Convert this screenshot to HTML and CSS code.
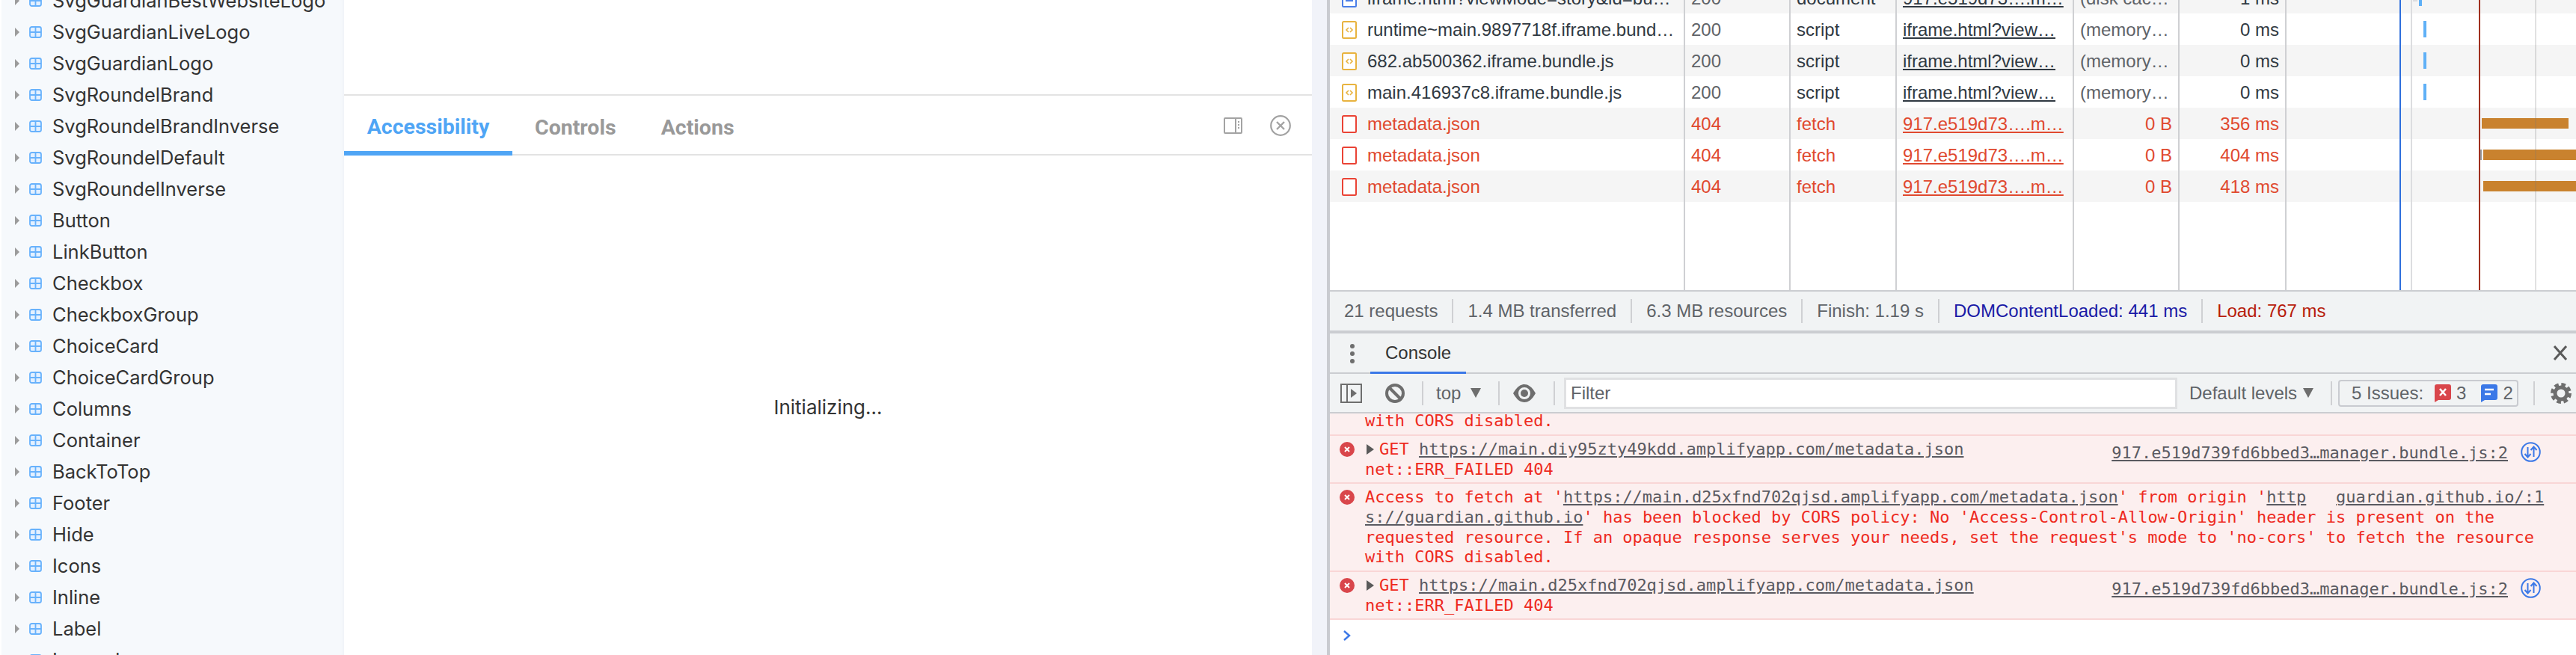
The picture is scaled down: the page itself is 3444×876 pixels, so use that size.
FILE: index.html
```html
<!DOCTYPE html>
<html lang="en">
<head>
<meta charset="utf-8">
<title>Storybook with DevTools</title>
<link rel="stylesheet" href="styles.css">
</head>
<body>
<svg class="defs" width="0" height="0" aria-hidden="true">
  <symbol id="grid" viewBox="0 0 17 16"><rect x="1" y="1" width="15" height="14" rx="2.5" fill="#e3f0ff" stroke="#68b2fc" stroke-width="1.8"/><path d="M8.5 1v14M1 8h15" stroke="#68b2fc" stroke-width="1.8"/></symbol>
  <symbol id="caret" viewBox="0 0 6 12"><path d="M0 0l6 6-6 6z" fill="#9c9c9c"/></symbol>
  <symbol id="script" viewBox="0 0 20 24"><rect x="1" y="1" width="18" height="22" rx="1.5" fill="#fff" stroke="#e8b33f" stroke-width="2"/><path d="M9 9l-3 3 3 3M11 9l3 3-3 3" fill="none" stroke="#e8b33f" stroke-width="1.6"/></symbol>
  <symbol id="doc" viewBox="0 0 20 24"><rect x="1" y="1" width="18" height="22" rx="1.5" fill="#fff" stroke="#4a7ee8" stroke-width="2"/><path d="M5 11h10M5 15h10" stroke="#4a7ee8" stroke-width="2"/></symbol>
  <symbol id="fail" viewBox="0 0 20 24"><rect x="1" y="1" width="18" height="22" rx="1.5" fill="#fff" stroke="#ea4335" stroke-width="2"/></symbol>
  <symbol id="err" viewBox="0 0 20 20"><circle cx="10" cy="10" r="10" fill="#d9464b"/><path d="M7 7l6 6M13 7l-6 6" stroke="#fff" stroke-width="2"/></symbol>
  <symbol id="sync" viewBox="0 0 27 27"><circle cx="13.500" cy="13.500" r="12.300" fill="none" stroke="#3b78e7" stroke-width="2"/><path d="M9.500 7v13M5.500 16l4 4.500 4-4.500M17.500 20V7M13.500 11l4-4.500 4 4.500" fill="none" stroke="#3b78e7" stroke-width="2"/></symbol>
</svg>

<nav class="sidebar">
  <div class="tree-row"><svg class="caret"><use href="#caret"/></svg><svg class="grid"><use href="#grid"/></svg><span>SvgGuardianBestWebsiteLogo</span></div>
  <div class="tree-row"><svg class="caret"><use href="#caret"/></svg><svg class="grid"><use href="#grid"/></svg><span>SvgGuardianLiveLogo</span></div>
  <div class="tree-row"><svg class="caret"><use href="#caret"/></svg><svg class="grid"><use href="#grid"/></svg><span>SvgGuardianLogo</span></div>
  <div class="tree-row"><svg class="caret"><use href="#caret"/></svg><svg class="grid"><use href="#grid"/></svg><span>SvgRoundelBrand</span></div>
  <div class="tree-row"><svg class="caret"><use href="#caret"/></svg><svg class="grid"><use href="#grid"/></svg><span>SvgRoundelBrandInverse</span></div>
  <div class="tree-row"><svg class="caret"><use href="#caret"/></svg><svg class="grid"><use href="#grid"/></svg><span>SvgRoundelDefault</span></div>
  <div class="tree-row"><svg class="caret"><use href="#caret"/></svg><svg class="grid"><use href="#grid"/></svg><span>SvgRoundelInverse</span></div>
  <div class="tree-row"><svg class="caret"><use href="#caret"/></svg><svg class="grid"><use href="#grid"/></svg><span>Button</span></div>
  <div class="tree-row"><svg class="caret"><use href="#caret"/></svg><svg class="grid"><use href="#grid"/></svg><span>LinkButton</span></div>
  <div class="tree-row"><svg class="caret"><use href="#caret"/></svg><svg class="grid"><use href="#grid"/></svg><span>Checkbox</span></div>
  <div class="tree-row"><svg class="caret"><use href="#caret"/></svg><svg class="grid"><use href="#grid"/></svg><span>CheckboxGroup</span></div>
  <div class="tree-row"><svg class="caret"><use href="#caret"/></svg><svg class="grid"><use href="#grid"/></svg><span>ChoiceCard</span></div>
  <div class="tree-row"><svg class="caret"><use href="#caret"/></svg><svg class="grid"><use href="#grid"/></svg><span>ChoiceCardGroup</span></div>
  <div class="tree-row"><svg class="caret"><use href="#caret"/></svg><svg class="grid"><use href="#grid"/></svg><span>Columns</span></div>
  <div class="tree-row"><svg class="caret"><use href="#caret"/></svg><svg class="grid"><use href="#grid"/></svg><span>Container</span></div>
  <div class="tree-row"><svg class="caret"><use href="#caret"/></svg><svg class="grid"><use href="#grid"/></svg><span>BackToTop</span></div>
  <div class="tree-row"><svg class="caret"><use href="#caret"/></svg><svg class="grid"><use href="#grid"/></svg><span>Footer</span></div>
  <div class="tree-row"><svg class="caret"><use href="#caret"/></svg><svg class="grid"><use href="#grid"/></svg><span>Hide</span></div>
  <div class="tree-row"><svg class="caret"><use href="#caret"/></svg><svg class="grid"><use href="#grid"/></svg><span>Icons</span></div>
  <div class="tree-row"><svg class="caret"><use href="#caret"/></svg><svg class="grid"><use href="#grid"/></svg><span>Inline</span></div>
  <div class="tree-row"><svg class="caret"><use href="#caret"/></svg><svg class="grid"><use href="#grid"/></svg><span>Label</span></div>
  <div class="tree-row"><svg class="caret"><use href="#caret"/></svg><svg class="grid"><use href="#grid"/></svg><span>Legend</span></div>
</nav>

<main class="story">
  <div class="canvas"></div>
  <div class="addon-bar">
    <div class="tab tab-active">Accessibility</div>
    <div class="tab">Controls</div>
    <div class="tab">Actions</div>
    <div class="addon-tools">
      <svg class="addon-panel" viewBox="0 0 25 22"><rect x="1" y="1" width="23" height="20" rx="1" fill="none" stroke="#a3a3a3" stroke-width="2"/><path d="M16 1v20" stroke="#a3a3a3" stroke-width="2"/><path d="M19 6h2M19 10h2M19 14h2" stroke="#a3a3a3" stroke-width="2"/></svg>
      <svg class="addon-close" viewBox="0 0 28 28"><circle cx="14" cy="14" r="12.800" fill="none" stroke="#a3a3a3" stroke-width="2.200"/><path d="M9 9l10 10M19 9L9 19" stroke="#a3a3a3" stroke-width="2.400"/></svg>
    </div>
  </div>
  <div class="addon-body">Initializing...</div>
</main>

<div class="gutter"></div>

<section class="devtools">
  <div class="net">
    <div class="net-row even">
      <div class="c name"><svg class="ficon"><use href="#doc"/></svg>iframe.html?viewMode=story&amp;id=bu…</div><div class="c status">200</div><div class="c">document</div><div class="c link">917.e519d73….m…</div><div class="c muted">(disk cac…</div><div class="c right tm">1 ms</div>
      <div class="wf"><i class="bar-wait wait-first"></i><i class="bar-blue blue-first"></i></div>
    </div>
    <div class="net-row">
      <div class="c name"><svg class="ficon"><use href="#script"/></svg>runtime~main.9897718f.iframe.bund…</div><div class="c status">200</div><div class="c">script</div><div class="c link">iframe.html?view…</div><div class="c muted">(memory…</div><div class="c right tm">0 ms</div>
      <div class="wf"><i class="bar-blue"></i></div>
    </div>
    <div class="net-row even">
      <div class="c name"><svg class="ficon"><use href="#script"/></svg>682.ab500362.iframe.bundle.js</div><div class="c status">200</div><div class="c">script</div><div class="c link">iframe.html?view…</div><div class="c muted">(memory…</div><div class="c right tm">0 ms</div>
      <div class="wf"><i class="bar-blue"></i></div>
    </div>
    <div class="net-row">
      <div class="c name"><svg class="ficon"><use href="#script"/></svg>main.416937c8.iframe.bundle.js</div><div class="c status">200</div><div class="c">script</div><div class="c link">iframe.html?view…</div><div class="c muted">(memory…</div><div class="c right tm">0 ms</div>
      <div class="wf"><i class="bar-blue"></i></div>
    </div>
    <div class="net-row even failed">
      <div class="c name"><svg class="ficon"><use href="#fail"/></svg>metadata.json</div><div class="c status">404</div><div class="c">fetch</div><div class="c link">917.e519d73….m…</div><div class="c right">0 B</div><div class="c right tm">356 ms</div>
      <div class="wf"><i class="bar-orange o1"></i></div>
    </div>
    <div class="net-row failed">
      <div class="c name"><svg class="ficon"><use href="#fail"/></svg>metadata.json</div><div class="c status">404</div><div class="c">fetch</div><div class="c link">917.e519d73….m…</div><div class="c right">0 B</div><div class="c right tm">404 ms</div>
      <div class="wf"><i class="bar-wait wait-mid"></i><i class="bar-orange o2"></i></div>
    </div>
    <div class="net-row even failed">
      <div class="c name"><svg class="ficon"><use href="#fail"/></svg>metadata.json</div><div class="c status">404</div><div class="c">fetch</div><div class="c link">917.e519d73….m…</div><div class="c right">0 B</div><div class="c right tm">418 ms</div>
      <div class="wf"><i class="bar-orange o2"></i></div>
    </div>
    <div class="net-row filler">
      <div class="c"></div><div class="c"></div><div class="c"></div><div class="c"></div><div class="c"></div><div class="c"></div><div class="wf"></div>
    </div>
    <i class="vline grid-a"></i><i class="vline grid-b"></i><i class="vline dcl"></i><i class="vline load"></i>
  </div>

  <div class="summary">
    <span class="sum-item">21 requests</span>
    <span class="sum-item">1.4 MB transferred</span>
    <span class="sum-item">6.3 MB resources</span>
    <span class="sum-item">Finish: 1.19 s</span>
    <span class="sum-item sum-dcl">DOMContentLoaded: 441 ms</span>
    <span class="sum-item sum-load">Load: 767 ms</span>
  </div>

  <div class="drawer-tabs">
    <svg class="kebab" viewBox="0 0 6 26"><circle cx="3" cy="3" r="3"/><circle cx="3" cy="13" r="3"/><circle cx="3" cy="23" r="3"/></svg>
    <div class="drawer-tab">Console</div>
    <svg class="drawer-close" viewBox="0 0 20 20"><path d="M2 1l16 18M18 1L2 19" stroke="#5a5a5a" stroke-width="3" fill="none"/></svg>
  </div>

  <div class="toolbar">
    <svg class="t-toggle" viewBox="0 0 29 26"><rect x="1" y="1" width="27" height="24" fill="none" stroke="#6e6e6e" stroke-width="2"/><path d="M9 1v24" stroke="#6e6e6e" stroke-width="2"/><path d="M14 7l8 6-8 6z" fill="#6e6e6e"/></svg>
    <svg class="t-block" viewBox="0 0 26 26"><circle cx="13" cy="13" r="11" fill="none" stroke="#6e6e6e" stroke-width="4"/><path d="M5 5l16 16" stroke="#6e6e6e" stroke-width="4"/></svg>
    <i class="t-sep sep-block"></i>
    <div class="t-top">top<i class="tri"></i></div>
    <i class="t-sep"></i>
    <svg class="t-eye" viewBox="0 0 30 24"><path d="M0 12C5 3 10 0 15 0s10 3 15 12c-5 9-10 12-15 12S5 21 0 12z" fill="#6e6e6e"/><circle cx="15" cy="12" r="8" fill="#f1f3f4"/><circle cx="15" cy="12" r="5" fill="#6e6e6e"/></svg>
    <i class="t-sep sep-eye"></i>
    <div class="t-filter">Filter</div>
    <div class="t-levels">Default levels<i class="tri"></i></div>
    <i class="t-sep"></i>
    <div class="t-issues">5 Issues:
      <svg class="badge badge-first" viewBox="0 0 22 24"><path d="M3 0h16a3 3 0 0 1 3 3v15a3 3 0 0 1-3 3H5l-5 3V3a3 3 0 0 1 3-3z" fill="#d9464b"/><path d="M7 6l8 9M15 6l-8 9" stroke="#fff" stroke-width="2.600"/></svg><span>3</span>
      <svg class="badge badge-second" viewBox="0 0 22 24"><path d="M3 0h16a3 3 0 0 1 3 3v15a3 3 0 0 1-3 3H5l-5 3V3a3 3 0 0 1 3-3z" fill="#3b78e7"/><path d="M5 7h12M5 13h8" stroke="#fff" stroke-width="2.600"/></svg><span>2</span>
    </div>
    <i class="t-sep sep-issues"></i>
    <svg class="t-gear" viewBox="0 0 28 28"><circle cx="14" cy="14" r="11.500" fill="none" stroke="#6e6e6e" stroke-width="5" stroke-dasharray="5.500 3.530"/><circle cx="14" cy="14" r="8" fill="none" stroke="#6e6e6e" stroke-width="5"/></svg>
  </div>

  <div class="console">
    <div class="msg msg-cut"><div class="msg-text">with CORS disabled.</div></div>
    <div class="msg">
      <svg class="m-err"><use href="#err"/></svg>
      <div class="msg-text"><i class="m-arrow"></i>GET <a class="u">https://main.diy95zty49kdd.amplifyapp.com/metadata.json</a><br>net::ERR_FAILED 404</div>
      <a class="u src">917.e519d739fd6bbed3…manager.bundle.js:2</a><svg class="m-sync"><use href="#sync"/></svg>
    </div>
    <div class="msg">
      <svg class="m-err"><use href="#err"/></svg>
      <div class="msg-text">Access to fetch at '<a class="u">https://main.d25xfnd702qjsd.amplifyapp.com/metadata.json</a>' from origin '<a class="u">http</a>   <a class="u">guardian.github.io/:1</a><br><a class="u">s://guardian.github.io</a>' has been blocked by CORS policy: No 'Access-Control-Allow-Origin' header is present on the<br>requested resource. If an opaque response serves your needs, set the request's mode to 'no-cors' to fetch the resource<br>with CORS disabled.</div>
    </div>
    <div class="msg">
      <svg class="m-err"><use href="#err"/></svg>
      <div class="msg-text"><i class="m-arrow"></i>GET <a class="u">https://main.d25xfnd702qjsd.amplifyapp.com/metadata.json</a><br>net::ERR_FAILED 404</div>
      <a class="u src">917.e519d739fd6bbed3…manager.bundle.js:2</a><svg class="m-sync"><use href="#sync"/></svg>
    </div>
    <div class="prompt"><svg class="chev" viewBox="0 0 11 14"><path d="M2 1l7 6-7 6" fill="none" stroke="#3b78e7" stroke-width="2.400"/></svg></div>
  </div>
</section>
</body>
</html>
```

FILE: styles.css
```css
* { box-sizing: border-box; }
html, body { margin: 0; padding: 0; }
body {
  width: 3444px;
  height: 876px;
  overflow: hidden;
  display: flex;
  background: #fff;
  font-family: "Liberation Sans", Arial, sans-serif;
}
i { display: block; font-style: normal; }
.defs { position: absolute; }

/* Sidebar */
.sidebar {
  width: 458px;
  height: 876px;
  flex: none;
  margin-left: 2px;
  background: #f6f9fc;
  box-shadow: inset -5px 0 5px -4px #eef0f5;
  overflow: hidden;
  font-family: Inter, "Liberation Sans", sans-serif;
  font-size: 25.500px;
  color: #333;
}
.tree-row {
  height: 42px;
  display: flex;
  align-items: center;
  position: relative;
  top: -20px;
}
.caret { width: 6px; height: 12px; margin-left: 18px; flex: none; }
.grid { width: 17px; height: 16px; margin-left: 13px; margin-right: 14px; flex: none; }
.tree-row span { position: relative; top: -1px; }

/* Storybook main */
.story {
  width: 1294px;
  flex: none;
  display: flex;
  flex-direction: column;
  height: 876px;
}
.canvas { height: 128px; flex: none; border-bottom: 2px solid #e3e3e3; }
.addon-bar {
  height: 80px;
  flex: none;
  border-bottom: 2px solid #e3e3e3;
  display: flex;
  font-family: Roboto, "Liberation Sans", sans-serif;
  font-weight: 700;
  font-size: 28.500px;
  color: #999;
}
.tab {
  padding: 4px 30px 0;
  display: flex;
  align-items: center;
  height: 80px;
  white-space: nowrap;
}
.tab-active {
  color: #4fa5f5;
  border-bottom: 6px solid #4fa5f5;
  padding: 8px 0 0;
  width: 225px;
  justify-content: center;
}
.addon-tools {
  margin-left: auto;
  display: flex;
  align-items: flex-start;
}
.addon-panel { width: 25px; height: 22px; margin-top: 29px; }
.addon-close { width: 28px; height: 28px; margin: 26px 28px 0 37px; }
.addon-body {
  flex: 1;
  display: flex;
  align-items: center;
  justify-content: center;
  padding-top: 4px;
  font-family: Inter, "Liberation Sans", sans-serif;
  font-size: 26px;
  color: #333;
}

.gutter { width: 20px; flex: none; background: #f1f3f9; }

/* DevTools */
.devtools {
  width: 1670px;
  flex: none;
  border-left: 4px solid #c9cbd0;
  display: flex;
  flex-direction: column;
  height: 876px;
  overflow: hidden;
}

.net {
  height: 388px;
  flex: none;
  position: relative;
  overflow: hidden;
  display: flex;
  flex-direction: column;
  font-size: 24px;
  color: #303942;
}
.net-row {
  height: 42px;
  flex: none;
  display: grid;
  grid-template-columns: 475px 141px 142px 237px 141px 143px 1fr;
  position: relative;
  top: -24px;
}
.net-row.even { background: #f5f5f5; }
.net-row.filler { flex: 1 0 160px; background: #fff; }
.c {
  border-right: 2px solid #cfd0d3;
  padding: 1px 8px 0 8px;
  line-height: 42px;
  white-space: nowrap;
  overflow: hidden;
}
.net-row > .c:last-of-type { border-right-width: 4px; }
.name { padding-left: 16px; display: flex; align-items: center; }
.ficon { width: 20px; height: 24px; margin-right: 14px; flex: none; }
.status { color: #5f6368; }
.muted { color: #5f6368; }
.link { text-decoration: underline; }
.right { text-align: right; }
.tm { padding-right: 8px; }
.failed, .failed .status, .failed .link { color: #e0492f; }

.wf { position: relative; }
.bar-blue {
  position: absolute;
  left: 183px;
  top: 10px;
  width: 4px;
  height: 22px;
  background: #5fb0f7;
}
.blue-first { left: 177px; }
.bar-wait { position: absolute; background: #c3c5c9; }
.wait-first { left: 169px; top: 10px; width: 6px; height: 16px; background: #dcdde0; }
.wait-mid { left: 259px; top: 14px; width: 2px; height: 14px; background: #999; }
.bar-orange { position: absolute; top: 14px; height: 14px; background: #c9822e; }
.o1 { left: 261px; width: 116px; }
.o2 { left: 263px; width: 130px; }

.vline { position: absolute; top: 0; bottom: 0; width: 2px; z-index: 2; }
.grid-a { left: 1445px; background: #dcdde0; }
.grid-b { left: 1611px; background: rgba(120, 120, 120, 0.22); }
.dcl { left: 1430px; background: #2f6fdc; }
.load { left: 1536px; background: #a0301f; }

.summary {
  height: 58px;
  flex: none;
  border-top: 2px solid #cbcdd1;
  border-bottom: 4px solid #cbcdd1;
  background: #f1f3f4;
  display: flex;
  align-items: center;
  font-size: 24px;
  color: #5f6368;
}
.sum-item {
  height: 32px;
  line-height: 32px;
  padding: 0 19px;
  border-right: 2px solid #cfd0d3;
  white-space: nowrap;
}
.sum-dcl { color: #1a1aa6; }
.sum-load { color: #b71c0c; border-right: 0; }

.drawer-tabs {
  height: 54px;
  flex: none;
  background: #f1f3f4;
  border-bottom: 2px solid #cbcdd1;
  display: flex;
  align-items: flex-start;
}
.kebab { width: 6px; height: 26px; margin: 14px 0 0 27px; fill: #6e6e6e; flex: none; }
.drawer-tab {
  width: 128px;
  height: 54px;
  margin-left: 21px;
  padding-left: 20px;
  line-height: 52px;
  font-size: 24px;
  color: #333;
  border-bottom: 3px solid #3b78e7;
}
.drawer-close { width: 20px; height: 20px; margin: 16px 11px 0 auto; }

.toolbar {
  height: 53px;
  flex: none;
  background: #f1f3f4;
  border-bottom: 2px solid #cbcdd1;
  display: flex;
  align-items: center;
  padding-left: 14px;
  font-size: 24px;
  color: #5f6368;
}
.t-toggle { width: 29px; height: 26px; flex: none; }
.t-block { width: 26px; height: 26px; margin-left: 31px; flex: none; }
.t-sep { width: 2px; height: 32px; background: #cfd0d3; flex: none; }
.sep-block { margin-left: 23px; }
.t-top {
  width: 100px;
  padding-left: 17px;
  display: flex;
  align-items: center;
}
.tri {
  width: 0;
  height: 0;
  border-left: 7px solid transparent;
  border-right: 7px solid transparent;
  border-top: 13px solid #6e6e6e;
  margin-left: 13px;
}
.t-eye { width: 30px; height: 24px; margin-left: 18px; flex: none; }
.sep-eye { margin-left: 24px; }
.t-filter {
  width: 820px;
  height: 42px;
  margin-left: 12px;
  background: #fff;
  border: 3px solid #e0e1e3;
  padding-left: 6px;
  line-height: 36px;
  flex: none;
}
.t-levels {
  width: 205px;
  padding-left: 16px;
  display: flex;
  align-items: center;
  white-space: nowrap;
}
.t-levels .tri { margin-left: 8px; }
.t-issues {
  width: 241px;
  height: 36px;
  margin-left: 8px;
  border: 2px solid #c9cbd0;
  border-radius: 4px;
  padding-left: 16px;
  display: flex;
  align-items: center;
  white-space: nowrap;
  flex: none;
}
.badge { width: 22px; height: 24px; flex: none; }
.badge-first { margin-left: 15px; margin-right: 7px; }
.badge-second { margin-left: 20px; margin-right: 7px; }
.sep-issues { margin-left: 20px; }
.t-gear { width: 28px; height: 28px; margin-left: 21px; flex: none; }

.console {
  flex: 1;
  font-family: "DejaVu Sans Mono", "Liberation Mono", monospace;
  font-size: 22px;
  color: #ee2a1e;
  display: flex;
  flex-direction: column;
  line-height: 26.670px;
  min-height: 0;
}
.msg {
  background: #fcefef;
  border-bottom: 2px solid #f9d6d6;
  padding: 5px 0 4px 47px;
  display: flex;
  position: relative;
  white-space: pre;
  flex: none;
}
.msg-cut { height: 30px; align-items: flex-end; overflow: hidden; }
.msg-text { flex: none; }
.u { color: #5a5a61; text-decoration: underline; }
.m-err { position: absolute; left: 13px; top: 8px; width: 20px; height: 20px; }
.m-arrow {
  display: inline-block;
  width: 0;
  height: 0;
  border-top: 7px solid transparent;
  border-bottom: 7px solid transparent;
  border-left: 10px solid #5a5a5a;
  margin: 0 7px 0 2px;
}
.src { margin: 5px 17px 0 auto; }
.m-sync { width: 27px; height: 27px; margin: 3px 47px 0 0; flex: none; }
.prompt { flex: 1; background: #fff; padding: 14px 0 0 17px; }
.chev { width: 11px; height: 14px; display: block; }
```
